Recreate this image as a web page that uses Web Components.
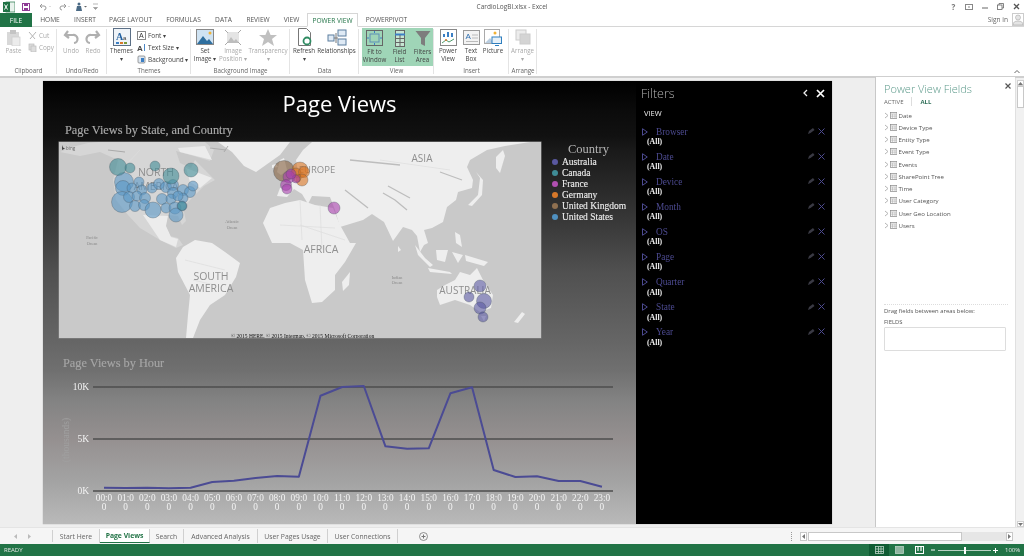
<!DOCTYPE html>
<html><head><meta charset="utf-8"><title>CardioLogBI.xlsx - Excel</title>
<style>
html,body{margin:0;padding:0;width:1024px;height:556px;overflow:hidden;background:#fff}
body{font-family:"Open Sans","Noto Sans",sans-serif}
</style></head><body>
<excel-app>
 <title-bar></title-bar>
 <ribbon-tabs></ribbon-tabs>
 <ribbon-bar>
  <rb-group label="Clipboard" w="57">
   <rb-btn label="Paste" w="27" off><svg width="15" height="17" viewBox="0 0 15 17"><rect x="1" y="3" width="12" height="13" fill="#d8d8d8"/><rect x="4" y="1" width="6" height="4" fill="#c4c4c4"/><rect x="6" y="8" width="8" height="9" fill="#ececec" stroke="#ccc" stroke-width=".7"/></svg></rb-btn>
   <rb-col>
    <rb-small off label="Cut"><svg width="9" height="9" viewBox="0 0 9 9" fill="none" stroke="#b5b5b5"><path d="M1 1l6 7M8 1L2 8"/></svg></rb-small>
    <rb-small off label="Copy"><svg width="9" height="9" viewBox="0 0 9 9" fill="#ddd" stroke="#bbb" stroke-width=".7"><rect x="1" y="1" width="5" height="6"/><rect x="3" y="3" width="5" height="6"/></svg></rb-small>
   </rb-col>
  </rb-group>
  <rb-group label="Undo/Redo" w="50" pad="3">
   <rb-btn label="Undo" w="22" off><svg width="16" height="16" viewBox="0 0 16 16" fill="none" stroke="#b0b0b0" stroke-width="2.200"><path d="M5 2L2 6l4 3M2.500 6H10a4 4 0 0 1 1 8"/></svg></rb-btn>
   <rb-btn label="Redo" w="22" off><svg width="16" height="16" viewBox="0 0 16 16" fill="none" stroke="#b0b0b0" stroke-width="2.200"><path d="M11 2l3 4-4 3M13.500 6H6a4 4 0 0 0-1 8"/></svg></rb-btn>
  </rb-group>
  <rb-group label="Themes" w="84">
   <rb-btn label="Themes<br>▾" w="29"><svg width="18" height="18" viewBox="0 0 18 18"><rect x=".5" y=".5" width="17" height="17" fill="#eef3f8" stroke="#5b6f86"/><text x="3" y="12" font-family="Liberation Serif" font-size="10" font-weight="700" fill="#1f5f9f">A</text><text x="10" y="12" font-family="Liberation Sans" font-size="6" fill="#333">a</text><rect x="3" y="14" width="3" height="2" fill="#3b7fc4"/><rect x="7" y="14" width="3" height="2" fill="#d9772b"/><rect x="11" y="14" width="3" height="2" fill="#7a9a3a"/></svg></rb-btn>
   <rb-col>
    <rb-small label="Font ▾"><svg width="9" height="9" viewBox="0 0 9 9"><rect x=".5" y=".5" width="8" height="8" fill="#fff" stroke="#888"/><text x="2" y="7.400" font-family="Liberation Sans" font-size="7" fill="#333">A</text></svg></rb-small>
    <rb-small label="Text Size ▾"><svg width="9" height="9" viewBox="0 0 9 9"><text x="0" y="8" font-family="Liberation Sans" font-size="8" font-weight="700" fill="#444">A</text><path d="M7.500 1v7" stroke="#4a86c5"/></svg></rb-small>
    <rb-small label="Background ▾"><svg width="9" height="9" viewBox="0 0 9 9"><rect x="1" y="1" width="7" height="7" rx="1" fill="#dfe8f2" stroke="#777" stroke-width=".7"/><rect x="4" y="3" width="3" height="4" fill="#3b7fc4"/></svg></rb-small>
   </rb-col>
  </rb-group>
  <rb-group label="Background Image" w="99">
   <rb-btn label="Set<br>Image ▾" w="28"><svg width="18" height="16" viewBox="0 0 18 16"><rect x=".5" y=".5" width="17" height="15" fill="#fff" stroke="#888"/><rect x="1" y="1" width="16" height="14" fill="#cfe3f3"/><path d="M1 15l6-8 4 5 2-2 4 5z" fill="#2f6f9f"/><circle cx="14" cy="4" r="1.500" fill="#f2b233"/></svg></rb-btn>
   <rb-btn label="Image<br>Position ▾" w="28" off><svg width="18" height="17" viewBox="0 0 18 17"><rect x="3" y="3" width="12" height="11" fill="#e4e4e4"/><path d="M3 14l4-6 3 4 2-2 3 4z" fill="#bdbdbd"/><path d="M1 1l3 3M17 1l-3 3M1 16l3-3M17 16l-3-3" stroke="#aaa"/></svg></rb-btn>
   <rb-btn label="Transparency<br>▾" w="42" off><svg width="18" height="17" viewBox="0 0 18 17"><path d="M9 0l2.600 6H18l-5 4 2 7-6-4-6 4 2-7-5-4h6.400z" fill="#c0c0c0"/></svg></rb-btn>
  </rb-group>
  <rb-group label="Data" w="69">
   <rb-btn label="Refresh<br>▾" w="28"><svg width="17" height="18" viewBox="0 0 17 18"><path d="M2.500.5h8l4 4v13h-12z" fill="#fff" stroke="#777"/><circle cx="11" cy="13" r="3.500" fill="none" stroke="#2e8b62" stroke-width="1.800"/></svg></rb-btn>
   <rb-btn label="Relationships" w="37"><svg width="20" height="17" viewBox="0 0 20 17" fill="#dfeaf5" stroke="#5c7f9f"><rect x="1" y="6" width="6" height="6"/><rect x="11" y="1" width="8" height="6"/><rect x="11" y="10" width="8" height="6"/><path d="M7 9h4M9 4v10" fill="none" stroke="#777"/></svg></rb-btn>
  </rb-group>
  <rb-group label="View" w="75" pad="3">
   <rb-on>
    <rb-btn label="Fit to<br>Window" w="25"><svg width="17" height="16" viewBox="0 0 17 16" fill="none"><rect x=".5" y=".5" width="16" height="15" stroke="#666"/><rect x="4" y="4" width="9" height="8" stroke="#5f8fb5"/><path d="M8.500 1v2M8.500 13v2M1 8h2M14 8h2" stroke="#3b7fc4"/></svg></rb-btn>
    <rb-btn label="Field<br>List" w="25"><svg width="10" height="17" viewBox="0 0 10 17"><rect x=".5" y=".5" width="9" height="16" fill="#c7e6d3" stroke="#666"/><path d="M0 4.500h10" stroke="#3b7fc4" stroke-width="2"/><path d="M0 8.500h10M0 12.500h10M5 5v12" stroke="#666"/></svg></rb-btn>
    <rb-btn label="Filters<br>Area" w="21"><svg width="16" height="17" viewBox="0 0 16 17"><path d="M.5 1h15l-5.500 7v8l-4-2V8z" fill="#7d7d7d"/></svg></rb-btn>
   </rb-on>
  </rb-group>
  <rb-group label="Insert" w="75" pad="2">
   <rb-btn label="Power<br>View" w="24"><svg width="17" height="17" viewBox="0 0 17 17"><rect x=".5" y=".5" width="16" height="16" fill="#fff" stroke="#888"/><path d="M3 5h2v3H3zM7 3h2v5H7zM11 4h2v4h-2z" fill="#3b7fc4"/><path d="M2 14l4-3 3 2 5-3" fill="none" stroke="#4e9a6b"/><circle cx="6" cy="11" r="1" fill="#d9772b"/></svg></rb-btn>
   <rb-btn label="Text<br>Box" w="22"><svg width="17" height="15" viewBox="0 0 17 15"><rect x=".5" y=".5" width="16" height="14" fill="#f3f3f3" stroke="#999"/><text x="2.500" y="9" font-family="Liberation Sans" font-size="8" fill="#2f6fb0">A</text><path d="M9 5h6M9 8h6M3 11.500h12" stroke="#bbb"/></svg></rb-btn>
   <rb-btn label="Picture" w="22"><svg width="18" height="17" viewBox="0 0 18 17"><rect x=".5" y=".5" width="15" height="14" fill="#fff" stroke="#aaa"/><path d="M1 14l5-5 4 5z" fill="#b9cde0"/><circle cx="11" cy="4" r="1.500" fill="#f2b233"/><rect x="8" y="8" width="9.500" height="6.500" fill="#e6f0f8" stroke="#2f7fbf"/><path d="M11 16.500h4" stroke="#2f7fbf"/></svg></rb-btn>
  </rb-group>
  <rb-group label="Arrange" w="28" last>
   <rb-btn label="Arrange<br>▾" w="27" off><svg width="16" height="16" viewBox="0 0 16 16"><rect x="1" y="1" width="10" height="10" fill="#ececec" stroke="#ccc"/><rect x="5" y="5" width="10" height="10" fill="#d4d4d4" stroke="#ccc"/></svg></rb-btn>
  </rb-group>
 </ribbon-bar>
 <main-row>
  <pv-canvas>
   <pv-report>
    <pv-map></pv-map>
    <pv-legend></pv-legend>
    <pv-chart slot="chart"></pv-chart>
   </pv-report>
   <pv-filters>
    <pv-filter name="Browser"></pv-filter><pv-filter name="Date"></pv-filter><pv-filter name="Device"></pv-filter><pv-filter name="Month"></pv-filter><pv-filter name="OS"></pv-filter><pv-filter name="Page"></pv-filter><pv-filter name="Quarter"></pv-filter><pv-filter name="State"></pv-filter><pv-filter name="Year"></pv-filter>
   </pv-filters>
  </pv-canvas>
  <pv-fields>
   <pv-field name="Date"></pv-field><pv-field name="Device Type"></pv-field><pv-field name="Entity Type"></pv-field><pv-field name="Event Type"></pv-field><pv-field name="Events"></pv-field><pv-field name="SharePoint Tree"></pv-field><pv-field name="Time"></pv-field><pv-field name="User Category"></pv-field><pv-field name="User Geo Location"></pv-field><pv-field name="Users"></pv-field>
  </pv-fields>
  <v-scroll></v-scroll>
 </main-row>
 <sheet-bar>
  <sheet-tab w="47" name="Start Here"></sheet-tab>
  <sheet-tab w="50" name="Page Views" active></sheet-tab>
  <sheet-tab w="34" name="Search"></sheet-tab>
  <sheet-tab w="74" name="Advanced Analysis"></sheet-tab>
  <sheet-tab w="70" name="User Pages Usage"></sheet-tab>
  <sheet-tab w="70" name="User Connections"></sheet-tab>
 </sheet-bar>
 <status-bar></status-bar>
</excel-app>
<script>
function def(name, css, html, init){
  customElements.define(name, class extends HTMLElement{
    connectedCallback(){
      if(this.shadowRoot) return;
      const r=this.attachShadow({mode:'open'});
      const a=n=>this.getAttribute(n);
      r.innerHTML='<style>'+css+'</style>'+(typeof html==='function'?html(a,this):html);
      if(init) init(this,r);
    }
  });
}
const UI='"Open Sans","Noto Sans",sans-serif', SERIF='"Liberation Serif",serif';

def('excel-app',`:host{display:flex;flex-direction:column;width:1024px;height:556px;overflow:hidden;background:#fff;filter:blur(.3px);font-family:${UI}}`,`<slot></slot>`);

def('title-bar',`:host{display:flex;align-items:center;height:13px;position:relative;color:#666;font-size:6.500px}
 .q{display:flex;align-items:center;gap:0;margin-left:3px;width:110px}
 .t{position:absolute;left:0;right:0;top:0;line-height:14px;text-align:center;color:#555}
 .w{margin-left:auto;display:flex;align-items:center}
 .w span{width:15.700px;display:flex;justify-content:center}`,
 `<div class="q">
  <svg width="12" height="12" viewBox="0 0 12 12"><rect x="3" y="1" width="9" height="10" fill="#e8f2ec" stroke="#217346" stroke-width=".7"/><rect y="1" width="7" height="10" fill="#217346"/><path d="M1.500 3.500l3 5M4.500 3.500l-3 5" stroke="#fff"/></svg>
  <svg style="margin-left:7px" width="8" height="8" viewBox="0 0 8 8"><rect x=".5" y=".5" width="7" height="7" fill="#fff" stroke="#8e3b94"/><rect x="2" y="1" width="4" height="2" fill="#8e3b94"/><rect x="2" y="5" width="4" height="2.500" fill="#8e3b94"/></svg>
  <svg style="margin-left:9px" width="12" height="8" viewBox="0 0 12 8" fill="none" stroke="#9a9a9a"><path d="M3 1L1 3l2 2M1 3h4a2 2 0 0 1 0 4"/><path d="M10 3l1 1 1-1" fill="#bbb" stroke="none"/></svg>
  <svg style="margin-left:7px" width="12" height="8" viewBox="0 0 12 8" fill="none" stroke="#9a9a9a"><path d="M6 1l2 2-2 2M8 3H4a2 2 0 0 0 0 4"/><path d="M10 3l1 1 1-1" fill="#bbb" stroke="none"/></svg>
  <svg style="margin-left:5px" width="12" height="10" viewBox="0 0 12 10"><circle cx="4" cy="2" r="1.500" fill="#4b6a85"/><path d="M2 4h4l1 5H1z" fill="#4b6a85"/><path d="M9 4l1.500 1.500L12 4z" fill="#666"/></svg>
  <svg style="margin-left:6px" width="5" height="8" viewBox="0 0 5 8"><path d="M0 1h5M.5 4.500l2 2 2-2z" stroke="#999" stroke-width=".7" fill="#999"/></svg>
 </div>
 <div class="t">CardioLogBI.xlsx - Excel</div>
 <div class="w">
  <span style="font-size:8px;font-weight:700;color:#777">?</span>
  <span><svg width="8" height="6"><rect x=".5" y=".5" width="7" height="5" fill="none" stroke="#888"/><path d="M3 3h2" stroke="#888"/></svg></span>
  <span><svg width="6" height="6"><path d="M0 4h6" stroke="#666"/></svg></span>
  <span><svg width="7" height="7" fill="none" stroke="#666" stroke-width=".8"><rect x=".5" y="2" width="4.500" height="4.500"/><path d="M2 2V.5h4.500V5H5"/></svg></span>
  <span><svg width="7" height="7" stroke="#555" stroke-width="1.300"><path d="M1 1l5 5M6 1L1 6"/></svg></span>
 </div>`);

def('ribbon-tabs',`:host{display:flex;height:14px;box-sizing:border-box;font-size:6.600px;color:#555;border-bottom:1px solid #d6d6d6;align-items:stretch;position:relative;white-space:nowrap}
 div{display:flex;align-items:center;justify-content:center;flex:none}
 .file{width:32px;background:#217346;color:#fff;margin-bottom:-1px}
 .pv{width:51px;background:#fff;color:#217346;border:1px solid #d6d6d6;border-bottom:1px solid #fff;margin-bottom:-1px;box-sizing:border-box;height:14px}
 .s{position:absolute;right:16px;top:0;height:13px;color:#666}
 .a{position:absolute;right:0;top:0;width:12px;height:13px;background:#fff;border:1px solid #ccc;box-sizing:border-box;align-items:flex-end;overflow:hidden}
 .a svg{display:block}`,
 `<div class="file">FILE</div><div style="width:9px"></div>
 <div style="width:18px">HOME</div><div style="width:16px"></div>
 <div style="width:20px">INSERT</div><div style="width:15px"></div>
 <div style="width:41px">PAGE LAYOUT</div><div style="width:16px"></div>
 <div style="width:33px">FORMULAS</div><div style="width:15px"></div>
 <div style="width:17px">DATA</div><div style="width:15px"></div>
 <div style="width:22px">REVIEW</div><div style="width:15px"></div>
 <div style="width:15px">VIEW</div><div style="width:8px"></div>
 <div class="pv">POWER VIEW</div><div style="width:9px"></div>
 <div style="width:39px">POWERPIVOT</div>
 <div class="s">Sign in</div>
 <div class="a"><svg width="10" height="12" viewBox="0 0 10 12"><circle cx="5" cy="4.500" r="2.500" fill="#e4e4e4" stroke="#aaa" stroke-width=".6"/><path d="M0 12c0-3 2-4 5-4s5 1 5 4z" fill="#e4e4e4" stroke="#aaa" stroke-width=".6"/></svg></div>`);

def('ribbon-bar',`:host{display:flex;height:49px;position:relative;background:#fff}
 .up{position:absolute;right:4px;top:42px}`,
 `<slot></slot><svg class="up" width="6" height="5" fill="none" stroke="#666"><path d="M.5 4l2.500-2.500L5.500 4"/></svg>`);

def('rb-group',`:host{display:flex;flex-direction:column;flex:none;box-sizing:border-box;height:49px;position:relative}
 .c{display:flex;height:39px;flex:none;box-sizing:border-box}
 .l{height:10px;line-height:10px;text-align:center;font-size:6.200px;color:#666}
 .s{position:absolute;right:0;top:2px;bottom:2px;width:1px;background:#e4e4e4}`,
 (a,el)=>{el.style.width=a('w')+'px';return `<div class="c" style="padding-left:${a('pad')||0}px"><slot></slot></div><div class="l">${a('label')}</div><div class="s"></div>`});

def('rb-on',`:host{display:flex;background:#9fd5b7;height:38px;margin-top:1px}`,`<slot></slot>`);

def('rb-btn',`:host{display:flex;flex-direction:column;align-items:center;flex:none;box-sizing:border-box;font-size:6.200px;color:#444;line-height:8px;text-align:center}
 :host([off]){color:#aaa}
 .i{height:20px;display:flex;align-items:center;justify-content:center;flex:none}
 .t{white-space:nowrap}`,
 (a,el)=>{el.style.width=a('w')+'px';return `<div class="i"><slot></slot></div><div class="t">${a('label')}</div>`});

def('rb-col',`:host{display:flex;flex-direction:column;padding-top:2px;gap:0;margin-left:1px}`,`<slot></slot>`);

def('rb-small',`:host{display:flex;align-items:center;height:12px;gap:2px;font-size:6.400px;color:#444;white-space:nowrap}
 :host([off]){color:#aaa}`,(a)=>`<slot></slot><span>${a('label')}</span>`);

def('main-row',`:host{display:flex;flex:1;min-height:0;border-top:2px solid #cfcfcf;background:#eeeeee;box-sizing:border-box}`,`<slot></slot>`);

def('pv-canvas',`:host{display:flex;width:789px;height:443px;margin:3px 43px 0 43px;flex:none;box-shadow:0 0 1px #999}`,`<slot></slot>`);

def('pv-report',`:host{display:flex;flex-direction:column;width:593px;height:443px;flex:none;font-family:${SERIF};
 background:linear-gradient(180deg,#000 0,#0b0b0b 30px,#111 55px,#1a1a1a 70px,#333 130px,#505050 190px,#666 262px,#707070 290px,#838383 320px,#959090 358px,#a3a3a3 400px,#b9b9b9 443px)}
 h1{font:400 22px/24px "Open Sans",sans-serif;color:#fff;text-align:center;margin:0;padding:10px 0 7px;height:24px}
 h2{font:400 12.300px/16px ${SERIF};margin:0;padding:0 0 0 22px;height:20px;color:#aaa;box-sizing:border-box;-webkit-text-stroke:.15px currentColor}
 .top{display:flex;padding-left:16px;height:197px}
 h2.b{color:#a6a6a6;margin-top:16px;padding-left:20px;height:21px}
 `,`<h1>Page Views</h1><h2>Page Views by State, and Country</h2>
 <div class="top"><slot></slot></div><h2 class="b">Page Views by Hour</h2><slot name="chart"></slot>`);

const circles=[
 ['us',124,182,9.5],['us',123,188,7.5],['us',122,202,10.5],['us',139,182,5],['us',132,188,5],['us',142,190,5],['us',129,197,5.5],['us',137,196,5],['us',145,198,5.5],['us',135,206,5.5],['us',144,205,5.5],['us',153,210,8],['us',152,188,5],['us',159,184,5.5],['us',166,187,5.5],['us',173,185,5.5],['us',162,199,5.5],['us',173,193,5.5],['us',171,199,5],['us',183,190,5.5],['us',190,192,5.5],['us',193,186,5],['us',183,198,5],['us',166,208,5],['us',175,208,6],['us',182,206,5],['us',176,215,7],['us',178,196,5],
 ['ca',118,167,8.5],['ca',130,168,5],['ca',155,166,5],['ca',171,176,8],['ca',191,170,7],['ca',182,206,4.5],
 ['uk',284,171,10.5],
 ['de',300,170,8],['de',296,173,5],['de',304,172,5.5],['de',302,180,6],['de',297,178,4],
 ['fr',289,177,6],['fr',296,179,4],['fr',291,174,5],['fr',286,185,5.5],['fr',287,189,5],['fr',334,208,6],
 ['au',480,286,6],['au',469,297,5],['au',484,301,7.5],['au',480,308,6],['au',483,317,5]];
const col={us:'#5a98c6',ca:'#3f8c96',uk:'#85613f',de:'#d9731f',fr:'#a93fae',au:'#5a58a2'};
const circleSvg=circles.map(c=>`<circle cx="${c[1]}" cy="${c[2]}" r="${c[3]}" fill="${col[c[0]]}" fill-opacity=".6" stroke="#3d4a55" stroke-opacity=".5" stroke-width=".6"/>`).join('');
const land=[
 "M218,142 L290,142 280,155 256,172 244,166 232,152 Z",
 "M183,247 L195,240 212,243 225,252 240,263 236,277 225,295 210,305 200,320 193,338 186,338 188,315 190,295 178,272 176,258 Z",
 "M263,223 L270,208 285,203 300,200 315,205 333,208 340,225 350,243 356,243 345,262 335,275 335,290 322,302 312,303 305,280 303,250 290,243 272,243 Z",
 "M350,272 L349,285 343,291 342,282 Z",
 "M277,196 L280,188 291,186 290,177 298,172 296,160 303,150 312,142 530,142 505,146 487,150 470,160 467,167 473,180 472,188 458,192 456,200 447,207 443,222 432,228 424,230 428,243 424,245 420,252 417,236 412,230 403,227 393,241 384,222 372,214 363,220 340,227 335,210 330,197 312,196 308,204 302,194 294,189 287,197 Z",
 "M496,157 L503,150 505,156 500,173 496,168 Z",
 "M280,160 L284,158 287,170 281,175 277,172 Z M272,165 L276,164 278,167 272,168 Z",
 "M468,205 L478,195 480,178 476,172 483,180 482,195 472,206 Z",
 "M437,290 L445,285 455,280 460,272 470,275 477,268 483,280 493,295 491,308 480,312 470,305 455,300 440,305 437,297 Z",
 "M481,316 L486,316 484,321 Z M514,322 L522,312 525,314 518,323 Z",
 "M415,245 L425,258 433,265 430,267 418,255 Z M428,268 L450,272 452,274 430,272 Z M436,250 L448,250 445,262 437,260 Z M452,252 L463,255 458,263 Z M465,255 L488,262 484,266 466,261 Z M455,232 L460,235 462,247 456,243 Z",
 "M398,246 L401,250 398,252 Z"
];
const landSvg=land.map(d=>`<path d="${d}"/>`).join('');
const NA="M60,152 L72,147 88,143 100,142 205,142 214,150 210,161 194,156 176,151 180,163 191,168 195,160 205,170 215,180 204,186 194,196 183,207 186,221 182,225 178,216 168,215 165,225 170,236 178,238 183,245 176,248 160,240 140,228 128,215 116,200 113,180 118,160 100,152 80,156 Z";
def('pv-map',`:host{display:block;width:482px;height:196px;flex:none;overflow:hidden;background:#c9c9c9;box-shadow:0 0 0 .5px #8a8a8a}
 svg{display:block}`,
 `<svg width="482" height="196" viewBox="59 142 482 196">
  <rect x="59" y="142" width="482" height="196" fill="#c9c9c9"/>
  <g style="filter:blur(.6px)">
   <path d="${NA}" fill="#d6d6d6"/>
   <path d="M143,215 L168,216 166,226 171,237 178,239 176,247 160,240 Z M178,148 L205,146 212,160 196,156 180,152 Z M186,168 L212,178 200,188 190,182 Z" fill="#ececec"/>
   <g fill="#eeeeee">${landSvg}</g>
   <path d="M120,160 L118,185 130,205 M140,150 L126,165 M300,200 L302,240 M320,205 L322,250 M280,225 L335,228 M185,260 L225,270 M193,280 L215,285 M300,225 L345,240 M380,160 L450,170" fill="none" stroke="#dcdcdc" stroke-width=".7"/>
   <path d="M383,193 L395,200 407,210 M388,186 L410,198 M345,190 L368,208 M440,172 L462,180 M350,160 L400,165" fill="none" stroke="#bdbdbd" stroke-width="1.300"/>
   <path d="M125,152 L108,150 M210,148 L226,150 M228,146 L224,152" fill="none" stroke="#aaa"/>
  </g>
  <g font-family="Open Sans,sans-serif" fill="#8f8f8f" text-anchor="middle">
   <text x="156" y="176" font-size="10.500">NORTH</text><text x="156" y="190" font-size="10.500">AMERICA</text>
   <text x="317" y="173" font-size="9.500">EUROPE</text>
   <text x="422" y="162" font-size="10">ASIA</text>
   <text x="321" y="253" font-size="10.500">AFRICA</text>
   <text x="211" y="280" font-size="10.500">SOUTH</text><text x="211" y="292" font-size="10.500">AMERICA</text>
   <text x="465" y="294" font-size="10">AUSTRALIA</text>
   <g font-size="4.200" fill="#888" font-family="Liberation Serif,serif"><text x="92" y="239">Pacific</text><text x="92" y="245">Ocean</text><text x="232" y="223">Atlantic</text><text x="232" y="229">Ocean</text><text x="397" y="279">Indian</text><text x="397" y="284">Ocean</text></g>
  </g>
  ${circleSvg}
  <path d="M62,145 v5 l3,-1.500 -2,-1 z" fill="#444"/><text x="66" y="149.500" font-family="Open Sans,sans-serif" font-size="4.500" fill="#666">bing</text>
  <text x="231" y="337.500" font-family="Liberation Serif,serif" font-size="5.500" fill="#111">© 2015 HERE, © 2015 Intermap, © 2015 Microsoft Corporation</text>
 </svg>`);

def('pv-legend',`:host{display:block;width:95px;flex:none;font-family:${SERIF};color:#eee}
 .t{height:14px;line-height:14px;font-size:12.500px;color:#b5b5b5;text-align:center;padding-bottom:.5px}
 .r{display:flex;align-items:center;height:11px;font-size:9.500px;padding-left:10.500px;gap:4.500px;white-space:nowrap;-webkit-text-stroke:.12px currentColor}
 i{width:6px;height:6px;border-radius:50%;flex:none}`,
 `<div class="t">Country</div>`+[['Australia','#5a58a0'],['Canada','#3f8c96'],['France','#b04fb0'],['Germany','#d6782a'],['United Kingdom','#8f7050'],['United States','#4f90c0']].map(r=>`<div class="r"><i style="background:${r[1]}"></i><span>${r[0]}</span></div>`).join(''));

const ys=[487.7,488,487.7,488.3,487.7,482,480.7,478,476,476.7,395.7,387,386,446.3,448.7,448.3,393.3,387.3,470,477,476.3,481,481,486.7];
const xs=ys.map((_,i)=>104+21.65*i);
const xl=ys.map((_,i)=>{const h=String(i).padStart(2,'0');return `<text x="${xs[i]}" y="501">${h}:0</text><text x="${xs[i]}" y="510">0</text>`}).join('');
def('pv-chart',`:host{display:block;width:593px;height:148px;flex:none}svg{display:block}`,
 `<svg width="593" height="148" viewBox="43 376 593 148">
  <g stroke="#4e4e4e" stroke-width="1.300"><path d="M93,387H613"/><path d="M93,439H613"/><path d="M93,491H613"/></g>
  <g font-family="Liberation Serif,serif" font-size="9.500" fill="#f2f2f2" text-anchor="end"><text x="89" y="390">10K</text><text x="89" y="442">5K</text><text x="89" y="494">0K</text></g>
  <text transform="translate(69,440) rotate(-90)" font-family="Liberation Serif,serif" font-size="9.500" fill="#a0a0a0" text-anchor="middle">(thousands)</text>
  <polyline fill="none" stroke="#4b4b94" stroke-width="2" stroke-linejoin="round" points="${xs.map((x,i)=>x+','+ys[i]).join(' ')}"/>
  <g font-family="Liberation Serif,serif" font-size="9.300" fill="#f4f4f4" text-anchor="middle">${xl}</g>
 </svg>`);

def('pv-filters',`:host{display:flex;flex-direction:column;width:196px;height:443px;background:#000;flex:none;box-sizing:border-box;position:relative}
 .h{display:flex;align-items:center;height:24px;padding:0 7px 0 5px;flex:none}
 .h b{font:300 12.500px ${UI};color:#b0b0b0;flex:1}
 .v{height:16px;font:400 7.500px/16px ${UI};color:#eee;padding-left:8px;margin-bottom:5px;flex:none}`,
 `<div class="h"><b>Filters</b><svg width="7" height="8" fill="none" stroke="#eee" stroke-width="1.300"><path d="M5 1L2 4l3 3"/></svg><svg style="margin-left:7px" width="9" height="9" stroke="#fff" stroke-width="1.700"><path d="M1 1l7 7M8 1L1 8"/></svg></div>
 <div class="v">VIEW</div><slot></slot>`);

def('pv-filter',`:host{display:block;height:25.100px;position:relative;flex:none;font-family:${SERIF}}
 .n{display:flex;align-items:center;height:11px;color:#4c4a90;font-size:9.300px;padding-left:6px}
 .n svg{margin-right:8px}
 .a{height:9px;line-height:9px;font-size:7.800px;font-weight:700;color:#f0f0f0;padding-left:11px}
 .e{position:absolute;left:171px;top:1px;display:flex;gap:3px;align-items:center}`,
 a=>`<div class="n"><svg width="6" height="8" fill="none" stroke="#4c4a90"><path d="M.5 .7v6.600L5.300 4z"/></svg>${a('name')}</div><div class="a">(All)</div>
 <div class="e"><svg width="8" height="8"><path d="M1 7l1-3 4-3 1.500 2-4 3z" fill="#3a3a44"/></svg><svg width="7" height="7" stroke="#4c4a90" stroke-width="1"><path d="M.5 .5l6 6M6.500 .5l-6 6"/></svg></div>`);

def('pv-fields',`:host{display:flex;flex-direction:column;width:140px;margin-left:0;background:#fff;border-left:1px solid #c8c8c8;box-sizing:border-box;flex:none;padding:3px 0 0 8px;position:relative;margin-top:-1px}
 h3{font:300 11px/17px ${UI};color:#5d9a8b;margin:0;height:17px}
 .x{position:absolute;left:129px;top:6px}
 .t{display:flex;align-items:center;font-size:6px;height:9px;color:#666;margin-bottom:3px}
 .t i{width:1px;height:9px;background:#ddd;margin:0 8px}
 .t b{color:#2f6f58;font-weight:700}
 .d{margin-top:72px;border-top:1px dotted #ddd;width:124px;font-size:5.900px;color:#555;line-height:10px;padding-top:1px}
 .f{font-size:5.900px;color:#555;line-height:10px;margin-top:1px}
 .b{width:122px;height:24px;border:1px solid #ddd;box-sizing:border-box;margin-top:0;border-radius:1px}`,
 `<h3>Power View Fields</h3><svg class="x" width="6" height="6" stroke="#555" stroke-width="1.200"><path d="M.5 .5l5 5M5.500 .5l-5 5"/></svg>
 <div class="t"><span>ACTIVE</span><i></i><b>ALL</b></div>
 <slot></slot>
 <div class="d">Drag fields between areas below:</div><div class="f">FIELDS</div><div class="b"></div>`);

def('pv-field',`:host{display:flex;align-items:center;height:12.270px;font-size:6.100px;color:#555;flex:none;white-space:nowrap}`,
 a=>`<svg width="5" height="7" fill="none" stroke="#b5b5b5" style="margin-right:.5px"><path d="M1 1l3 2.500-3 2.500"/></svg><svg width="7" height="7" style="margin-right:2px"><rect x=".5" y=".5" width="6.500" height="6" fill="#f4f4f4" stroke="#888" stroke-width=".7"/><path d="M0 2h7M2.500 2v5M5 2v5M0 4.200h7" stroke="#aaa" stroke-width=".5"/></svg>${a('name')}`);

def('v-scroll',`:host{display:flex;flex-direction:column;width:9px;flex:none;background:#f1f1f1;border-left:1px solid #e0e0e0;box-sizing:border-box;align-items:center;padding-top:2px;position:relative}
 .b{width:7px;height:6px;background:#fff;border:1px solid #d0d0d0;box-sizing:border-box;display:flex;align-items:center;justify-content:center}
 .th{width:7px;height:22px;background:#fff;border:1px solid #c8c8c8;box-sizing:border-box;margin-top:0}
 .e{margin-top:auto;margin-bottom:0}`,
 `<div class="b"><svg width="5" height="3"><path d="M0 3l2.500-3L5 3z" fill="#777"/></svg></div><div class="th"></div>
 <div class="b e"><svg width="5" height="3"><path d="M0 0l2.500 3L5 0z" fill="#777"/></svg></div>`);

def('sheet-bar',`:host{display:flex;align-items:center;height:17px;background:#f5f5f5;flex:none;position:relative;font-size:7px;color:#666;box-sizing:border-box;border-top:1px solid #e4e4e4}
 .n{width:53px;flex:none;display:flex;gap:11px;padding-left:14px;box-sizing:border-box;border-right:1px solid #d0d0d0;height:12px;align-items:center}
 .p{margin-left:21px;flex:none}
 .r{margin-left:auto;display:flex;align-items:center;height:16px;width:233px;box-sizing:border-box;padding-right:11px}
 .h{display:flex;align-items:center;margin-left:8px}
 .bt{width:7px;height:9px;background:#fff;border:1px solid #c8c8c8;box-sizing:border-box;display:flex;align-items:center;justify-content:center;flex:none}
 .th{width:154px;height:9px;background:#fff;border:1px solid #c8c8c8;box-sizing:border-box;margin-left:1px;flex:none}
 .tr{width:44px;height:9px;background:#e6e6e6;flex:none}
 .dots{width:2px;height:9px;border-left:1px dotted #999;box-sizing:border-box}`,
 `<div class="n"><svg width="3" height="5"><path d="M3 0L0 2.500 3 5z" fill="#bbb"/></svg><svg width="3" height="5"><path d="M0 0l3 2.500L0 5z" fill="#bbb"/></svg></div>
 <slot></slot>
 <svg class="p" width="9" height="9" fill="none" stroke="#777" stroke-width=".8"><circle cx="4.500" cy="4.500" r="4"/><path d="M2.500 4.500h4M4.500 2.500v4" stroke-width="1"/></svg>
 <div class="r"><div class="dots"></div><div class="h"><div class="bt"><svg width="3" height="5"><path d="M3 0L0 2.500 3 5z" fill="#777"/></svg></div><div class="th"></div><div class="tr"></div><div class="bt"><svg width="3" height="5"><path d="M0 0l3 2.500L0 5z" fill="#777"/></svg></div></div></div>`);

def('sheet-tab',`:host{display:flex;align-items:center;justify-content:center;height:14px;box-sizing:border-box;border-right:1px solid #d0d0d0;flex:none;white-space:nowrap;font-size:6.800px;color:#666;background:transparent}
 :host([active]){background:#fff;color:#217346;font-weight:700;border-bottom:1px solid #217346}`,
 (a,el)=>{el.style.width=a('w')+'px';return a('name')});

def('status-bar',`:host{display:flex;align-items:center;height:12px;background:#217346;color:#e6e6e6;font-size:6px;flex:none;padding-left:4px;box-sizing:border-box}
 .r{margin-left:auto;display:flex;align-items:center;height:12px}
 .v{width:20px;height:12px;display:flex;align-items:center;justify-content:center}
 .on{background:#0f5c33}
 .sl{width:53px;height:1px;background:#b9d2c4;position:relative;margin:0 2px 0 3px}
 .sl i{position:absolute;left:26px;top:-3px;width:2px;height:7px;background:#fff}`,
 `<span>READY</span><div class="r">
 <div class="v on"><svg width="9" height="8" fill="none" stroke="#b9d2c4" stroke-width=".8"><rect x=".5" y=".5" width="8" height="7"/><path d="M.5 3h8M.5 5.500h8M3.500 .5v7M6 .5v7"/></svg></div>
 <div class="v"><svg width="9" height="8"><rect x=".5" y=".5" width="8" height="7" fill="#8fb5a0" stroke="#b9d2c4" stroke-width=".8"/></svg></div>
 <div class="v"><svg width="9" height="8" fill="none" stroke="#fff"><rect x=".5" y=".5" width="8" height="7"/><path d="M3 0v5M6 0v5" stroke-width="1.200"/></svg></div>
 <svg style="margin-left:2px" width="4" height="4"><path d="M0 2h4" stroke="#fff"/></svg>
 <div class="sl"><i></i></div>
 <svg width="5" height="5"><path d="M0 2.500h5M2.500 0v5" stroke="#fff"/></svg>
 <span style="margin:0 4px 0 7px;width:15px">100%</span></div>`);
</script>
</body></html>
